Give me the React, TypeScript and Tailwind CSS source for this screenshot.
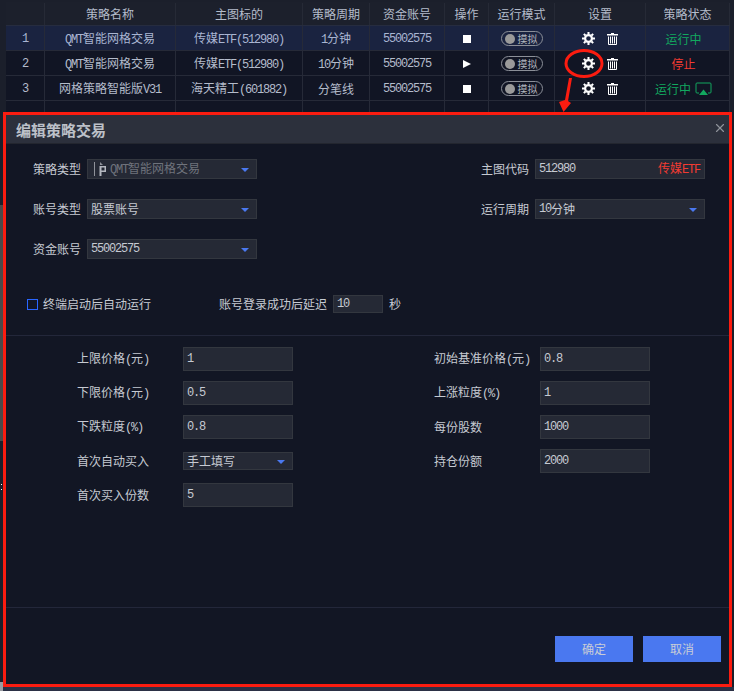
import { Fragment } from "react";
import { X } from "lucide-react";

const cols = [
  "w-[39px]",
  "w-[131px]",
  "w-[127px]",
  "w-[67px]",
  "w-[75px]",
  "w-[44px]",
  "w-[66px]",
  "w-[91px]",
  "w-[84px]",
];

const headers = ["", "策略名称", "主图标的", "策略周期", "资金账号", "操作", "运行模式", "设置", "策略状态"];

const rows = [
  { no: "1", name: "QMT智能网格交易", symbol: "传媒ETF(512980)", period: "1分钟", running: true, screen: false },
  { no: "2", name: "QMT智能网格交易", symbol: "传媒ETF(512980)", period: "10分钟", running: false, screen: false },
  { no: "3", name: "网格策略智能版V31", symbol: "海天精工(601882)", period: "分笔线", running: true, screen: true },
];

// SimSun style latin: every latin char is half a CJK char wide
function Mix({ text }: { text: string }) {
  const parts = text.split(/([\x20-\x7e]+)/).filter(Boolean);
  return (
    <>
      {parts.map((p, i) =>
        /^[\x20-\x7e]+$/.test(p) ? (
          <span key={i} className="font-['Liberation_Mono',monospace] tracking-[-1.2px]">
            {p}
          </span>
        ) : (
          <Fragment key={i}>{p}</Fragment>
        ),
      )}
    </>
  );
}

function Gear() {
  return (
    <svg width="13" height="13" viewBox="0 0 14 14" fill="none">
      <circle cx="7" cy="7" r="3.7" stroke="#fff" strokeWidth="2.4" />
      <g stroke="#fff" strokeWidth="2.2">
        <path d="M7 0v2.4M7 11.6V14M0 7h2.4M11.6 7H14M2 2l1.7 1.7M10.3 10.3L12 12M12 2l-1.7 1.7M3.7 10.3L2 12" />
      </g>
    </svg>
  );
}

function TrashIcon() {
  return (
    <svg width="11" height="12" viewBox="0 0 11 12" fill="none">
      <path d="M4 0h3v1h4v1.5H0V1h4z" fill="#fff" />
      <path d="M1.5 3.5V11.5H9.5V3.5" stroke="#fff" />
      <path d="M3 3.5h1v7H3zM5 3.5h1v7H5zM7 3.5h1v7H7z" fill="#fff" />
    </svg>
  );
}

function Caret() {
  return <span className="w-0 h-0 border-x-[4px] border-x-transparent border-t-[4px] border-t-[#4a78f0] mt-px" />;
}

function Select({ children, className }: { children: React.ReactNode; className: string }) {
  return (
    <div className={`${className} flex items-center justify-between pl-[3px] pr-[7px] bg-[#252935] border border-[#33373f] text-[#c6cad2]`}>
      <span className="flex items-center">{children}</span>
      <Caret />
    </div>
  );
}

function Field({ value }: { value: string }) {
  return (
    <div className="h-6 w-[110px] flex items-center pl-[3px] bg-[#252935] border border-[#33373f] text-[#c6cad2]">
      <Mix text={value} />
    </div>
  );
}

function ParamRow({ label, children }: { label: string; children: React.ReactNode }) {
  return (
    <div className="flex items-center">
      <span className="w-[106px] text-[#c6cad2] whitespace-nowrap">
        <Mix text={label} />
      </span>
      {children}
    </div>
  );
}

export default function App() {
  return (
    <div className="relative w-[734px] h-[691px] overflow-hidden bg-[#1b1f2b] pl-[6px] pt-[2px] text-[12px] leading-none font-['Noto_Sans_CJK_SC','Liberation_Sans',sans-serif]">
      {/* strategy table */}
      <div className="w-[724px] text-[#b4bccb]">
        <div className="flex h-6 pt-px bg-[#1c202c] border-b border-[#262c3f]">
          {headers.map((h, i) => (
            <div key={i} className={`${cols[i]} flex items-center justify-center border-r border-[#262a36]`}>
              {h}
            </div>
          ))}
        </div>
        {rows.map((r, idx) => (
          <div key={r.no} className={`flex h-[25px] border-b border-[#262a38] ${idx === 0 ? "bg-[#1a2340] text-[#a9b5d2]" : "bg-[#111524]"}`}>
            <div className={`${cols[0]} flex items-center justify-center pt-px border-r border-[#262a38]`}>
              <Mix text={r.no} />
            </div>
            <div className={`${cols[1]} flex items-center justify-center pt-px border-r border-[#262a38]`}>
              <span>
                <Mix text={r.name} />
              </span>
            </div>
            <div className={`${cols[2]} flex items-center justify-center pt-px border-r border-[#262a38]`}>
              <span>
                <Mix text={r.symbol} />
              </span>
            </div>
            <div className={`${cols[3]} flex items-center justify-center pt-px border-r border-[#262a38]`}>
              <span>
                <Mix text={r.period} />
              </span>
            </div>
            <div className={`${cols[4]} flex items-center justify-center pt-px border-r border-[#262a38]`}>
              <Mix text="55002575" />
            </div>
            <div className={`${cols[5]} flex items-center justify-center pt-px border-r border-[#262a38]`}>
              {r.running ? (
                <span className="w-2 h-2 bg-white" />
              ) : (
                <span className="w-0 h-0 border-y-[4px] border-y-transparent border-l-[8px] border-l-white" />
              )}
            </div>
            <div className={`${cols[6]} flex items-center justify-center pt-px border-r border-[#262a38]`}>
              <span className="flex items-center w-[42px] h-[15px] rounded-full border border-[#8b8f98] pl-[3px] gap-[3px] text-[10px] text-[#b0b4bc]">
                <span className="w-[10px] h-[10px] rounded-full bg-[#9a9a9a]" />
                摸拟
              </span>
            </div>
            <div className={`${cols[7]} flex items-center justify-center gap-3 pt-px border-r border-[#262a38]`}>
              <Gear />
              <TrashIcon />
            </div>
            <div className={`${cols[8]} flex items-center justify-center gap-1 pt-px pr-2 border-r border-[#262a38] ${r.running ? "text-[#12a85f]" : "text-[#f23b32]"}`}>
              {r.running ? "运行中" : "停止"}
              {r.screen && (
                <svg width="17" height="14" viewBox="0 0 17 14" fill="none">
                  <path d="M4 11H2a1 1 0 0 1-1-1V2a1 1 0 0 1 1-1h13a1 1 0 0 1 1 1v8a1 1 0 0 1-1 1h-2" stroke="#12a85f" strokeWidth="1" />
                  <path d="M8.5 7.5L13 13H4z" fill="#12a85f" />
                </svg>
              )}
            </div>
          </div>
        ))}
        <div className="flex h-[11px] bg-[#111524]">
          {cols.map((c) => (
            <div key={c} className={`${c} border-r border-[#262a38]`} />
          ))}
        </div>
      </div>

      {/* edit dialog */}
      <div className="-ml-[3px] w-[729px] h-[575px] border-[3px] border-[#fb1c10] bg-[#121624] flex flex-col">
        <div className="h-[29px] shrink-0 flex items-center justify-between pl-[10px] pr-[2px] bg-[#2c303c] border-b border-[#23262f] text-[#bcc0c8]">
          <span className="text-[15px] font-bold">编辑策略交易</span>
          <X size={14} color="#8f929a" className="-mt-[3px]" />
        </div>

        <div className="h-[192px] shrink-0 border-b border-[#23273a] pt-[15px] text-[#c6cad2]">
          <div className="flex justify-between pl-[27px] pr-[24px]">
            <div className="flex flex-col gap-5">
              <div className="flex items-center gap-[6px]">
                <span>策略类型</span>
                <Select className="w-[170px] h-5">
                  <svg width="13" height="14" viewBox="0 0 13 14" className="ml-[3px] mr-[3px]" fill="none">
                    <path d="M0.5 0v14" stroke="#8f929a" />
                    <path d="M6 0l3 3H6z" fill="#8f929a" />
                    <path fillRule="evenodd" d="M5.5 4h6.5v6H7.5v4h-2zM7.5 5.5v3h3v-3z" fill="#b4b7bf" />
                  </svg>
                  <span className="text-[#6f737c]">
                    <Mix text="QMT智能网格交易" />
                  </span>
                </Select>
              </div>
              <div className="flex items-center gap-[6px]">
                <span>账号类型</span>
                <Select className="w-[170px] h-5">股票账号</Select>
              </div>
              <div className="flex items-center gap-[6px]">
                <span>资金账号</span>
                <Select className="w-[170px] h-5">
                  <Mix text="55002575" />
                </Select>
              </div>
            </div>
            <div className="flex flex-col gap-5">
              <div className="flex items-center gap-[6px]">
                <span>主图代码</span>
                <div className="w-[170px] h-5 flex items-center justify-between pl-[3px] pr-1 bg-[#252935] border border-[#33373f]">
                  <Mix text="512980" />
                  <span className="text-[#f23b32]">
                    <Mix text="传媒ETF" />
                  </span>
                </div>
              </div>
              <div className="flex items-center gap-[6px]">
                <span>运行周期</span>
                <Select className="w-[170px] h-5">
                  <Mix text="10分钟" />
                </Select>
              </div>
            </div>
          </div>

          <div className="flex items-center mt-[36px] pl-[21px]">
            <span className="w-[11px] h-[11px] shrink-0 p-px bg-[#2a66ff] mr-[5px]">
              <span className="block w-full h-full bg-[#121624]" />
            </span>
            <span className="w-[176px]">终端启动后自动运行</span>
            <span className="mr-[6px]">账号登录成功后延迟</span>
            <div className="w-[50px] h-[18px] flex items-center pl-[3px] bg-[#252935] border border-[#33373f]">
              <Mix text="10" />
            </div>
            <span className="ml-[6px]">秒</span>
          </div>
        </div>

        <div className="h-[272px] shrink-0 border-b border-[#23273a] pt-[11px] pl-[71px] flex">
          <div className="w-[357px] flex flex-col gap-[10px]">
            <ParamRow label="上限价格(元)"><Field value="1" /></ParamRow>
            <ParamRow label="下限价格(元)"><Field value="0.5" /></ParamRow>
            <ParamRow label="下跌粒度(%)"><Field value="0.8" /></ParamRow>
            <div className="h-6 flex items-center">
              <span className="w-[106px] text-[#c6cad2]">首次自动买入</span>
              <Select className="w-[110px] h-[18px]">手工填写</Select>
            </div>
            <ParamRow label="首次买入份数"><Field value="5" /></ParamRow>
          </div>
          <div className="flex flex-col gap-[10px]">
            <ParamRow label="初始基准价格(元)"><Field value="0.8" /></ParamRow>
            <ParamRow label="上涨粒度(%)"><Field value="1" /></ParamRow>
            <ParamRow label="每份股数"><Field value="1000" /></ParamRow>
            <ParamRow label="持仓份额"><Field value="2000" /></ParamRow>
          </div>
        </div>

        <div className="flex justify-end gap-[10px] pt-[28px] pr-[8px]">
          <button className="w-[78px] h-[26px] bg-[#4a78f0] text-[#c9cdd6]">确定</button>
          <button className="w-[78px] h-[26px] bg-[#4a78f0] text-[#c9cdd6]">取消</button>
        </div>
      </div>
      <div className="-ml-[6px] h-1 bg-[#2b3045]" />

      {/* bits of the window behind, left of the dialog */}
      <div className="absolute left-0 top-[205px] w-[3px] h-[236px] bg-[#4a4a4a]" />
      <div className="absolute left-[1px] top-[484px] w-px h-px bg-white" />
      <div className="absolute left-[1px] top-[489px] w-px h-px bg-white" />
      <div className="absolute left-0 top-[682px] w-[3px] h-[9px] bg-[#9a9ca2]" />

      {/* red annotations drawn over the screenshot */}
      <svg className="absolute left-[555px] top-[44px]" width="60" height="72" viewBox="0 0 60 72" fill="none">
        <ellipse cx="29" cy="19.5" rx="18" ry="13" stroke="#fb1c10" strokeWidth="3" />
        <path d="M14 34L10 56L4 58L8.5 68L16 59L13 57L17 34z" fill="#fb1c10" />
      </svg>
    </div>
  );
}
